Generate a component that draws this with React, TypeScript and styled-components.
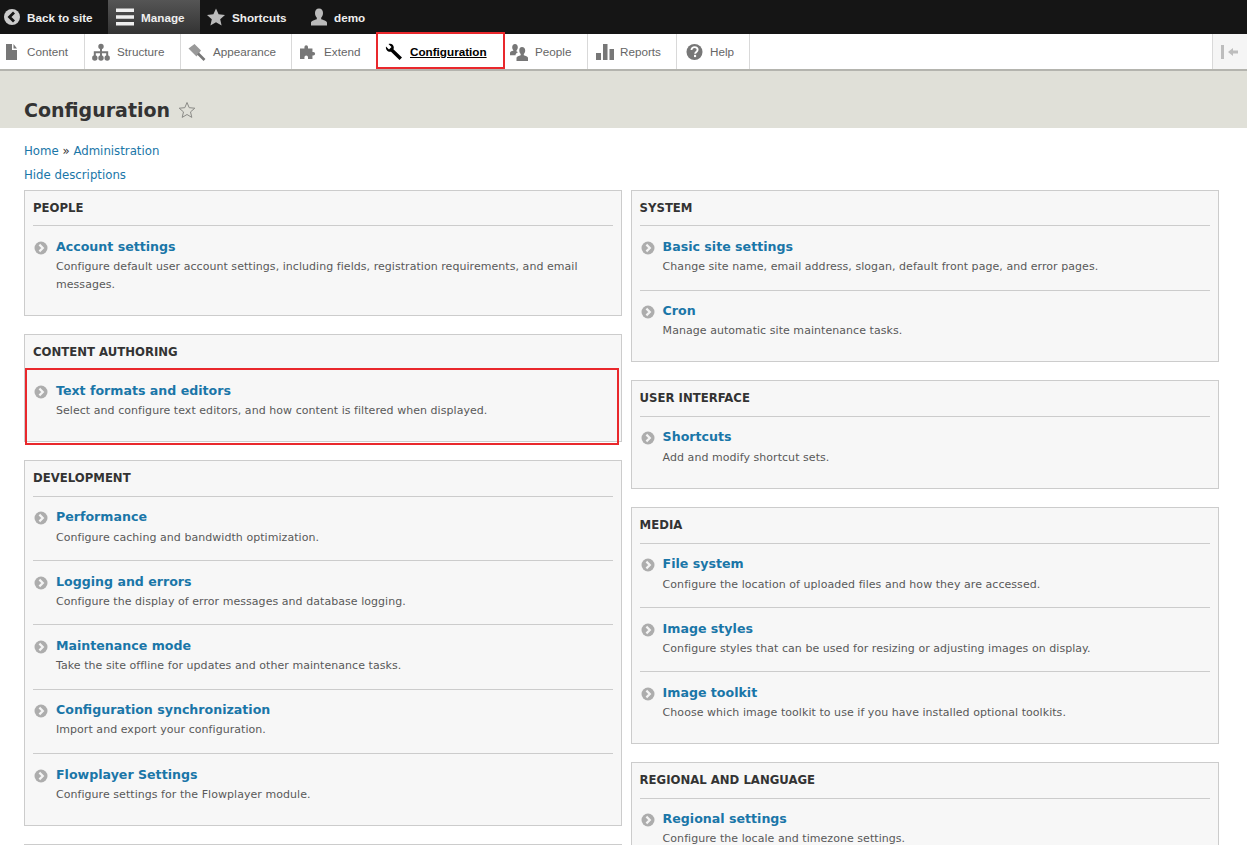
import styled, { createGlobalStyle } from "styled-components"

const GlobalStyle = createGlobalStyle`
    html, body {
        margin: 0;
        padding: 0;
        background: #fff;
        color: #333;
        font-family: "DejaVu Sans", sans-serif;
        font-size: 11.75px;
    }
    html { height: 845px; overflow: hidden; }
    * { box-sizing: border-box; }
`

type Entry = { title: string; text: string[] }
type Section = { name: string; entries: Entry[]; marked?: boolean; minHeight: number }

const leftColumn: Section[] = [
    {
        name: "PEOPLE",
        minHeight: 126,
        entries: [{
            title: "Account settings",
            text: ["Configure default user account settings, including fields, registration requirements, and email", "messages."],
        }],
    },
    {
        name: "CONTENT AUTHORING",
        minHeight: 108.4,
        marked: true,
        entries: [{
            title: "Text formats and editors",
            text: ["Select and configure text editors, and how content is filtered when displayed."],
        }],
    },
    {
        name: "DEVELOPMENT",
        minHeight: 366,
        entries: [
            { title: "Performance", text: ["Configure caching and bandwidth optimization."] },
            { title: "Logging and errors", text: ["Configure the display of error messages and database logging."] },
            { title: "Maintenance mode", text: ["Take the site offline for updates and other maintenance tasks."] },
            { title: "Configuration synchronization", text: ["Import and export your configuration."] },
            { title: "Flowplayer Settings", text: ["Configure settings for the Flowplayer module."] },
        ],
    },
    { name: "", minHeight: 60, entries: [] },
]

const rightColumn: Section[] = [
    {
        name: "SYSTEM",
        minHeight: 172.4,
        entries: [
            { title: "Basic site settings", text: ["Change site name, email address, slogan, default front page, and error pages."] },
            { title: "Cron", text: ["Manage automatic site maintenance tasks."] },
        ],
    },
    {
        name: "USER INTERFACE",
        minHeight: 109,
        entries: [{ title: "Shortcuts", text: ["Add and modify shortcut sets."] }],
    },
    {
        name: "MEDIA",
        minHeight: 236.9,
        entries: [
            { title: "File system", text: ["Configure the location of uploaded files and how they are accessed."] },
            { title: "Image styles", text: ["Configure styles that can be used for resizing or adjusting images on display."] },
            { title: "Image toolkit", text: ["Choose which image toolkit to use if you have installed optional toolkits."] },
        ],
    },
    {
        name: "REGIONAL AND LANGUAGE",
        minHeight: 110,
        entries: [{ title: "Regional settings", text: ["Configure the locale and timezone settings."] }],
    },
]

const TopBar = styled.div`
    display: flex;
    height: 34px;
    background: #151515;
    font-family: "Liberation Sans", Arial, sans-serif;
`

const TopLink = styled.a<{ $active?: boolean; $width: number; $pad: number; $gap: number }>`
    display: flex;
    align-items: center;
    gap: ${props => props.$gap}px;
    width: ${props => props.$width}px;
    padding-left: ${props => props.$pad}px;
    color: #eee;
    font-size: 11.7px;
    font-weight: bold;
    background: ${props => props.$active ? "linear-gradient(#555, #333)" : "none"};
`

const Tray = styled.div`
    position: relative;
    display: flex;
    height: 37px;
    background: #fff;
    border-bottom: 2px solid #b4b4ae;
    font-family: "Liberation Sans", Arial, sans-serif;
`

const TrayLink = styled.a<{ $width: number; $pad: number; $gap: number; $current?: boolean }>`
    position: relative;
    display: flex;
    align-items: center;
    gap: ${props => props.$gap}px;
    width: ${props => props.$width}px;
    padding-left: ${props => props.$pad}px;
    border-right: 1px solid #d9d9d9;
    color: ${props => props.$current ? "#000" : "#666"};
    font-size: 11.7px;
    font-weight: ${props => props.$current ? "bold" : "normal"};
    text-decoration: ${props => props.$current ? "underline" : "none"};
`

const TrayMark = styled.span`
    position: absolute;
    left: -1px;
    right: -1px;
    top: -2px;
    bottom: 0;
    border: 2px solid #e9282c;
`

const Collapse = styled.div`
    display: flex;
    align-items: center;
    justify-content: center;
    width: 35px;
    margin-left: auto;
    background: #f5f5f5;
    border-left: 1px solid #d9d9d9;
`

const PageHeader = styled.div`
    display: flex;
    align-items: center;
    gap: 8px;
    height: 57px;
    padding: 21px 24px 0;
    background: #e0e0d8;
`

const Title = styled.h1`
    margin: 0;
    font-size: 19px;
    font-weight: bold;
    color: #333;
`

const Content = styled.div`
    padding: 14px 28px 0 24px;
`

const Crumbs = styled.div`
    height: 24px;
    line-height: 18px;
    color: #333;
`

const TextLink = styled.a`
    color: #1a76a8;
`

const Toggle = styled.div`
    height: 24px;
    line-height: 18px;
`

const Columns = styled.div`
    display: flex;
    gap: 9px;
    align-items: flex-start;
`

const Column = styled.div<{ $width: number }>`
    display: flex;
    flex-direction: column;
    gap: 18px;
    width: ${props => props.$width}px;
`

const Panel = styled.section<{ $minHeight: number; $inset: number }>`
    position: relative;
    min-height: ${props => props.$minHeight}px;
    padding: 0 8px 0 ${props => props.$inset}px;
    background: #f7f7f7;
    border: 1px solid #ccc;
`

const PanelTitle = styled.h3`
    display: flex;
    align-items: center;
    height: 34.4px;
    margin: 0;
    padding-bottom: 1px;
    font-size: 11.7px;
    font-weight: bold;
    color: #333;
`

const Item = styled.div`
    display: grid;
    grid-template-columns: 23px 1fr;
    grid-template-rows: 20.2px auto;
    padding: 11.6px 0 0;
    height: 64.3px;
    border-top: 1px solid #ccc;
`

const Bullet = styled.svg`
    width: 14px;
    height: 14px;
    margin-top: 3px;
    margin-left: 1px;
`

const ItemTitle = styled.a`
    display: block;
    line-height: 18px;
    font-size: 12.6px;
    font-weight: bold;
    color: #1a76a8;
`

const ItemText = styled.div`
    grid-column: 2;
    font-size: 11px;
    line-height: 18px;
    color: #595959;
    white-space: nowrap;
    letter-spacing: 0.05px;
`

const MarkBox = styled.div`
    position: absolute;
    left: 0;
    right: 2px;
    top: 33px;
    bottom: -4px;
    border: 2px solid #e9282c;
`

const TopIcon = styled.svg<{ $width?: number }>`
    width: ${props => props.$width ?? 18}px;
    height: 18px;
    flex: none;
`

const BulletIcon = () => (
    <Bullet viewBox="0 0 14 14">
        <circle cx="7" cy="7" r="6.5" fill="#adadad" />
        <path d="M5.4 3.6 L8.8 7 L5.4 10.4" fill="none" stroke="#f4f4f4" strokeWidth="2.2" />
    </Bullet>
)

const Panels = ({ sections, inset }: { sections: Section[]; inset: number }) => (
    <>
        {sections.map(section => (
            <Panel key={section.name || "more"} $minHeight={section.minHeight} $inset={inset}>
                {section.name && <PanelTitle>{section.name}</PanelTitle>}
                {section.entries.map(entry => (
                    <Item key={entry.title}>
                        <BulletIcon />
                        <ItemTitle>{entry.title}</ItemTitle>
                        <ItemText>
                            {entry.text.map(line => <div key={line}>{line}</div>)}
                        </ItemText>
                    </Item>
                ))}
                {section.marked && <MarkBox />}
            </Panel>
        ))}
    </>
)

const App = () => {
    return (
        <>
            <GlobalStyle />
            <TopBar>
                <TopLink $width={108} $pad={3} $gap={6}>
                    <TopIcon viewBox="0 0 18 18">
                        <circle cx="9" cy="9" r="8" fill="#ccc" />
                        <path d="M11 4.5 L6.5 9 L11 13.5" fill="none" stroke="#151515" strokeWidth="2.8" />
                    </TopIcon>
                    Back to site
                </TopLink>
                <TopLink $active $width={92} $pad={8} $gap={7}>
                    <TopIcon viewBox="0 0 18 18">
                        <path d="M0 0.5h18v3.4H0zM0 7.3h18v3.4H0zM0 14.100h18v3.400H0z" fill="#eee" />
                    </TopIcon>
                    Manage
                </TopLink>
                <TopLink $width={103} $pad={7} $gap={7}>
                    <TopIcon viewBox="0 0 18 18">
                        <path d="M9 0.5 L11.6 6.3 L18 7 L13.2 11.2 L14.6 17.5 L9 14.2 L3.4 17.5 L4.8 11.2 L0 7 L6.4 6.3 Z" fill="#bbb" />
                    </TopIcon>
                    Shortcuts
                </TopLink>
                <TopLink $width={100} $pad={7} $gap={6}>
                    <TopIcon viewBox="0 0 18 18">
                        <path d="M9 0.5c2.6 0 4 2 4 4.6 0 2-.8 3.6-1.8 4.6v1.6c2 .7 5.8 1.6 5.8 3.4V17.500H1V14.700c0-1.800 3.800-2.700 5.800-3.400V9.700C5.800 8.700 5 7.100 5 5.100 5 2.500 6.400.5 9 .5z" fill="#bbb" />
                    </TopIcon>
                    demo
                </TopLink>
            </TopBar>
            <Tray>
                <TrayLink $width={85} $pad={6} $gap={10}>
                    <TopIcon viewBox="0 0 11 18" $width={11}>
                        <path d="M0 1h6v6h5v10H0zM7.500 1L11 5.500H7.500z" fill="#777" />
                    </TopIcon>
                    Content
                </TrayLink>
                <TrayLink $width={96} $pad={7} $gap={7}>
                    <TopIcon viewBox="0 0 18 18">
                        <circle cx="9" cy="3.500" r="2.700" fill="#777" />
                        <circle cx="2.800" cy="15" r="2.700" fill="#777" />
                        <circle cx="9" cy="15" r="2.700" fill="#777" />
                        <circle cx="15.200" cy="15" r="2.700" fill="#777" />
                        <path d="M9 5v10M2.800 14V9.300h12.400V14" fill="none" stroke="#777" strokeWidth="2" />
                    </TopIcon>
                    Structure
                </TrayLink>
                <TrayLink $width={111} $pad={7} $gap={7}>
                    <TopIcon viewBox="0 0 18 18">
                        <path d="M0.500 5.500 L6.500 1 L13 7.500 L8.500 13.500 Z" fill="#999" />
                        <path d="M10 10.500 L16.500 17" stroke="#777" strokeWidth="2.600" />
                    </TopIcon>
                    Appearance
                </TrayLink>
                <TrayLink $width={85} $pad={8} $gap={8}>
                    <TopIcon viewBox="0 0 18 18" $width={16}>
                        <path d="M0 5h5V3.500a2 2 0 1 1 4 0V5h5v4h1a2 2 0 1 1 0 4h-1v4H9v-2a2 2 0 0 0-4 0v2H0z" fill="#777" />
                    </TopIcon>
                    Extend
                </TrayLink>
                <TrayLink $width={128} $pad={8} $gap={7} $current>
                    <TopIcon viewBox="0 0 18 18">
                        <path d="M1 3.500 L4 6.500 L6.500 4 L3.500 1 C6 0 8.800 1.500 8.800 4.500 C8.800 5.200 8.700 5.800 8.400 6.300 L17 14.500 L14.500 17 L6 8.700 C3.500 9.500 .2 7 1 3.500 Z" fill="#000" />
                    </TopIcon>
                    Configuration
                    <TrayMark />
                </TrayLink>
                <TrayLink $width={83} $pad={5} $gap={7}>
                    <TopIcon viewBox="0 0 18 18">
                        <path d="M5 1c1.800 0 2.800 1.400 2.800 3.200 0 1.400-.5 2.400-1.300 3.200v1.200c.5.200 1 .4 1.500.6-1.500.8-2.500 1.500-2.500 3H0v-2.500c0-1 2-1.600 3.500-2.100V7.400C2.700 6.600 2.200 5.600 2.200 4.200 2.200 2.400 3.200 1 5 1z" fill="#777" />
                        <path d="M12 4c2 0 3.200 1.500 3.200 3.500 0 1.500-.6 2.700-1.400 3.500v1.300c1.600.6 4.200 1.200 4.200 2.500V18H6.500v-3.200c0-1.300 2.600-1.900 4.200-2.500V11c-.8-.8-1.400-2-1.400-3.500C9.300 5.500 10 4 12 4z" fill="#777" />
                    </TopIcon>
                    People
                </TrayLink>
                <TrayLink $width={89} $pad={8} $gap={6}>
                    <TopIcon viewBox="0 0 18 18">
                        <path d="M0 10h5v7H0zM7 1h4.500v16H7zM13.500 6H18v11h-4.500z" fill="#777" />
                    </TopIcon>
                    Reports
                </TrayLink>
                <TrayLink $width={73} $pad={9} $gap={7}>
                    <TopIcon viewBox="0 0 18 18" $width={17}>
                        <circle cx="9" cy="9" r="8.500" fill="#777" />
                        <path d="M5.800 7c0-2 1.500-3.200 3.300-3.200S12.300 5 12.300 6.600c0 2.300-2.600 2.400-2.600 4.300" fill="none" stroke="#fff" strokeWidth="2" />
                        <rect x="8.500" y="12" width="2.200" height="2.400" fill="#fff" />
                    </TopIcon>
                    Help
                </TrayLink>
                <Collapse>
                    <TopIcon viewBox="0 0 18 18">
                        <path d="M0 2h3v14H0zM7 9l5-4v2.500h5v3h-5V13z" fill="#bdbdbd" />
                    </TopIcon>
                </Collapse>
            </Tray>
            <PageHeader>
                <Title>Configuration</Title>
                <TopIcon viewBox="0 0 18 18">
                    <path d="M9 1.500 L11.200 6.700 L16.800 7.200 L12.500 10.900 L13.800 16.400 L9 13.500 L4.200 16.400 L5.500 10.900 L1.200 7.200 L6.800 6.700 Z" fill="none" stroke="#8a8a86" strokeWidth="1" />
                </TopIcon>
            </PageHeader>
            <Content>
                <Crumbs>
                    <TextLink>Home</TextLink> » <TextLink>Administration</TextLink>
                </Crumbs>
                <Toggle>
                    <TextLink>Hide descriptions</TextLink>
                </Toggle>
                <Columns>
                    <Column $width={598}><Panels sections={leftColumn} inset={8} /></Column>
                    <Column $width={588}><Panels sections={rightColumn} inset={7.6} /></Column>
                </Columns>
            </Content>
        </>
    )
}

export default App
